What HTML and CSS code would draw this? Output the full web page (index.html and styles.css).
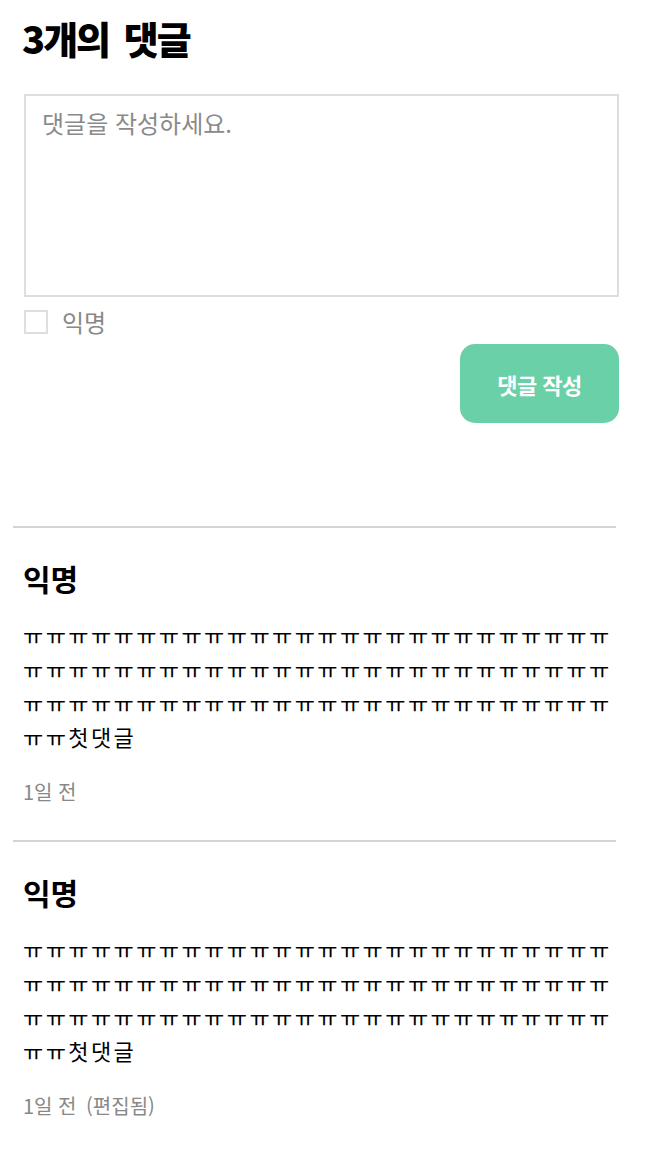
FILE: index.html
```html
<!DOCTYPE html>
<html lang="ko">
<head>
    <meta charset="UTF-8">
    <meta name="viewport" content="width=device-width, initial-scale=1.0">
    <title>댓글</title>
    <link rel="stylesheet" href="styles.css">
</head>
<body>
    <div class="comment-section">
        <h2 class="comment-title">3개의 댓글</h2>

        <form class="comment-form" onsubmit="return false;">
            <textarea class="comment-input" placeholder="댓글을 작성하세요."></textarea>
            <label class="anon-check">
                <span class="check-box"></span>
                <span class="check-label">익명</span>
            </label>
            <div class="form-actions">
                <button type="submit" class="btn-submit">댓글 작성</button>
            </div>
        </form>

        <div class="comment-list">
            <div class="comment-item">
                <h3 class="comment-author">익명</h3>
                <p class="comment-body">ㅠㅠㅠㅠㅠㅠㅠㅠㅠㅠㅠㅠㅠㅠㅠㅠㅠㅠㅠㅠㅠㅠㅠㅠㅠㅠㅠㅠㅠㅠㅠㅠㅠㅠㅠㅠㅠㅠㅠㅠㅠㅠㅠㅠㅠㅠㅠㅠㅠㅠㅠㅠㅠㅠㅠㅠㅠㅠㅠㅠㅠㅠㅠㅠㅠㅠㅠㅠㅠㅠㅠㅠㅠㅠㅠㅠㅠㅠㅠㅠ첫댓글</p>
                <div class="comment-meta">1일 전</div>
            </div>
            <div class="comment-item">
                <h3 class="comment-author">익명</h3>
                <p class="comment-body">ㅠㅠㅠㅠㅠㅠㅠㅠㅠㅠㅠㅠㅠㅠㅠㅠㅠㅠㅠㅠㅠㅠㅠㅠㅠㅠㅠㅠㅠㅠㅠㅠㅠㅠㅠㅠㅠㅠㅠㅠㅠㅠㅠㅠㅠㅠㅠㅠㅠㅠㅠㅠㅠㅠㅠㅠㅠㅠㅠㅠㅠㅠㅠㅠㅠㅠㅠㅠㅠㅠㅠㅠㅠㅠㅠㅠㅠㅠㅠㅠ첫댓글</p>
                <div class="comment-meta">1일 전 <span class="edited">(편집됨)</span></div>
            </div>
        </div>
    </div>
</body>
</html>
```

FILE: styles.css
```css
body {
    margin: 0;
    font-family: "Noto Sans CJK KR", "Noto Sans", sans-serif;
    color: #000;
    background: #fff;
}
.comment-section {
    padding: 0 51px 40px 0;
}
.comment-title {
    margin: 0 0 0 22px;
    padding-top: 14px;
    font-size: 38px;
    font-weight: 900;
    line-height: 48px;
    letter-spacing: -2px;
    word-spacing: 6px;
}
.comment-form {
    margin: 32px 0 0 24px;
}
.comment-input {
    display: block;
    box-sizing: border-box;
    width: 100%;
    height: 203px;
    padding: 10px 16px;
    border: 2px solid #dedede;
    font-family: inherit;
    font-size: 24px;
    line-height: 34px;
    resize: none;
    outline: none;
}
.comment-input::placeholder {
    color: #8a8a8a;
}
.anon-check {
    display: flex;
    align-items: center;
    gap: 14px;
    margin-top: 12px;
    height: 25px;
}
.check-box {
    box-sizing: border-box;
    width: 24px;
    height: 24px;
    border: 2px solid #dedede;
}
.check-label {
    color: #888;
    font-size: 24px;
    line-height: 25px;
}
.form-actions {
    display: flex;
    justify-content: flex-end;
    margin-top: 10px;
}
.btn-submit {
    width: 159px;
    height: 79px;
    border: none;
    border-radius: 15px;
    background: #6ad0a7;
    color: #fff;
    font-family: inherit;
    font-size: 22px;
    font-weight: bold;
    letter-spacing: -0.5px;
    cursor: pointer;
}
.comment-list {
    margin: 103px 3px 0 13px;
}
.comment-item {
    border-top: 2px solid #d4d4d4;
    padding: 30px 0 0 10px;
    height: 314px;
    box-sizing: border-box;
}
.comment-author {
    margin: 0;
    font-size: 30px;
    font-weight: bold;
    line-height: 40px;
}
.comment-body {
    width: 590px;
    margin: 19px 0 0;
    font-size: 22px;
    line-height: 34px;
    letter-spacing: 2.4px;
    word-break: break-all;
}
.comment-meta {
    margin-top: 26px;
    color: #888;
    font-size: 20px;
    line-height: 26px;
}
.edited {
    margin-left: 4px;
}
```
